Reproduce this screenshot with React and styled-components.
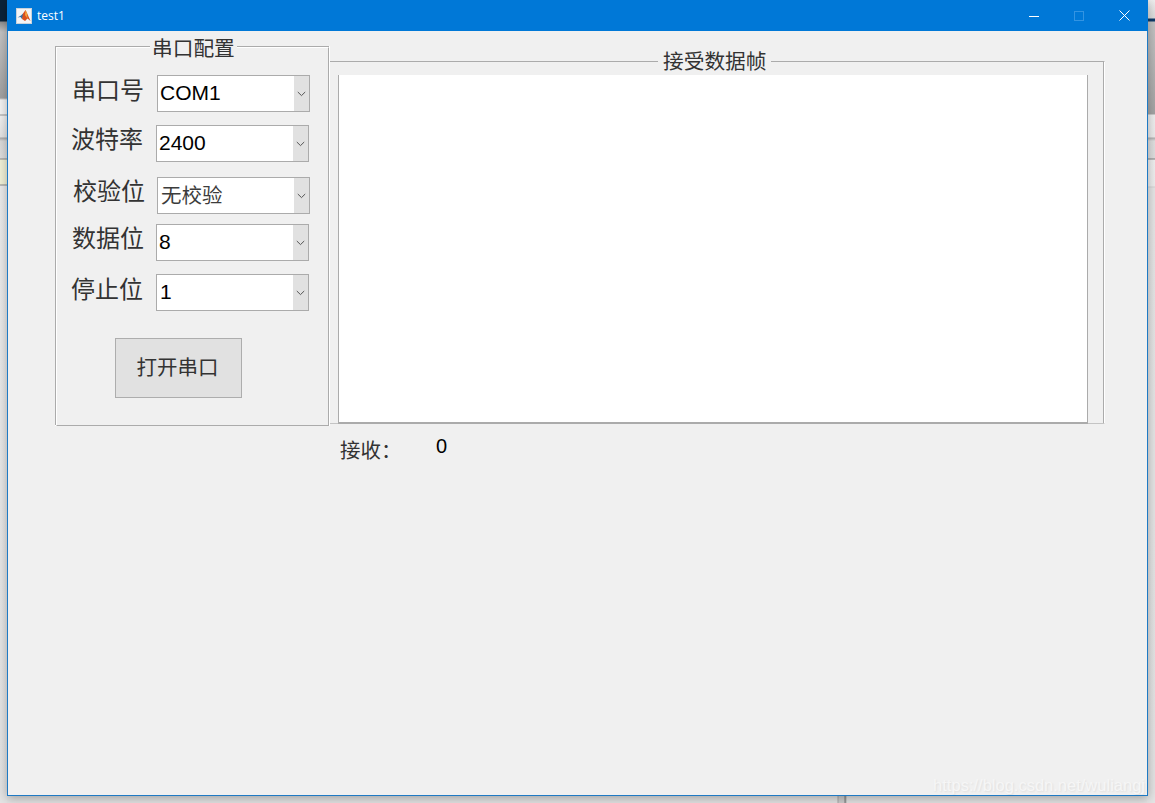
import React from 'react'
import styled, { createGlobalStyle } from 'styled-components'

const GlobalStyle = createGlobalStyle`
html, body {
  margin: 0;
  padding: 0;
  overflow: hidden;
}
`

const cjk = `"Noto Sans CJK SC", "Liberation Sans", sans-serif`
const latin = `"Liberation Sans", Arial, sans-serif`

const Desktop = styled.div`
  width: 1155px;
  height: 803px;
  overflow: hidden;
  background:
    linear-gradient(to bottom,
      #0b2338 0, #0b2338 21px, #8f8f8f 22px, #c4c4c4 32px, #a2a2a2 98px,
      #f4f4f4 100px, #f4f4f4 114px, #9a9a9a 115px, #f2f2f2 116px, #e4e4e4 137px,
      #a8a8a8 138px, #dadada 141px, #dedede 158px, #8a8a8a 159px, #f2f2d8 160px,
      #f2f2d8 184px, #8a8a8a 185px, #ececec 186px, #e4e4e4 100%) 0 0 / 7px 100% no-repeat,
    linear-gradient(to bottom,
      #eeeeee 0, #dcdcdc 18px, #0d3a6a 19px, #0d3a6a 21px, #c4c4c4 22px, #a4a4a4 114px,
      #f0f0f0 115px, #ececec 137px, #b0b0b0 138px, #e0e0e0 141px, #dedede 158px,
      #808080 159px, #f0f0f0 160px, #eeeeee 186px, #d4d4d4 187px, #e6e6e6 188px, #e4e4e4 100%) 100% 0 / 8px 100% no-repeat,
    linear-gradient(to right,
      #e2e2e2 0, #e2e2e2 837px, #a8a8a8 838px, #cccccc 839px, #cccccc 844px,
      #7d7d7d 845px, #e2e2e2 847px, #e2e2e2 100%);
`

const Window = styled.div`
  position: relative;
  box-sizing: border-box;
  width: 1141px;
  height: 796px;
  margin-left: 7px;
  border: 1px solid #1f7ac4;
  border-top: none;
  background: #f0f0f0;
  box-shadow: 0 2px 10px rgba(0, 0, 0, 0.3);
  display: flex;
  flex-direction: column;
`

const TitleBar = styled.div`
  height: 31px;
  margin: 0 -1px;
  background: #0078d7;
  display: flex;
  align-items: center;
  flex-shrink: 0;
`

const AppIcon = styled.svg`
  width: 16px;
  height: 16px;
  margin-left: 9px;
  margin-top: 1px;
`

const Title = styled.span`
  margin-left: 5px;
  font-family: "Open Sans", "Noto Sans", sans-serif;
  font-size: 12px;
  color: #ffffff;
`

const Controls = styled.div`
  margin-left: auto;
  display: flex;
  height: 100%;
`

const ControlButton = styled.div`
  width: ${(p) => (p.$close ? 47 : 45)}px;
  display: flex;
  align-items: center;
  justify-content: center;
`

const Content = styled.div`
  flex: 1;
  display: flex;
  align-items: flex-start;
  padding: 15px 0 0 47px;
`

const ConfigPanel = styled.div`
  position: relative;
  box-sizing: border-box;
  width: 275px;
  height: 380px;
  border: 1px solid #ffffff;
  border-top: none;
  border-left: none;
  box-shadow: inset 1px 1px 0 #ababab;
  flex-shrink: 0;
`

const PanelInner = styled.div`
  box-sizing: border-box;
  height: 100%;
  border: 1px solid #ffffff;
  border-right-color: #ababab;
  border-bottom-color: #ababab;
  margin: 1px 0 0 1px;
  padding-top: 27px;
`

const Legend = styled.span`
  position: absolute;
  top: ${(p) => p.$top}px;
  left: ${(p) => p.$left}px;
  padding: 0 ${(p) => p.$pad}px;
  background: #f0f0f0;
  font-family: ${cjk};
  font-size: 20.7px;
  line-height: 26px;
  color: #333333;
  white-space: nowrap;
`

const Row = styled.div`
  display: grid;
  grid-template-columns: 99px 154px;
  margin-top: ${(p) => p.$top}px;
`

const Label = styled.span`
  padding-left: ${(p) => p.$left}px;
  margin-top: ${(p) => p.$shift}px;
  font-family: ${cjk};
  font-size: 24px;
  line-height: 32px;
  color: #333333;
  white-space: nowrap;
`

const Dropdown = styled.div`
  box-sizing: border-box;
  width: 153px;
  height: 37px;
  margin-left: ${(p) => p.$left}px;
  border: 1px solid #ababab;
  background: #ffffff;
  display: flex;
  align-items: center;
`

const DropdownValue = styled.span`
  flex: 1;
  padding-left: ${(p) => p.$pad}px;
  padding-bottom: ${(p) => (p.$cjk ? 4 : 2)}px;
  font-family: ${(p) => (p.$cjk ? cjk : latin)};
  font-size: ${(p) => (p.$cjk ? 20.5 : 21)}px;
  color: ${(p) => (p.$cjk ? '#3c3c3c' : '#000000')};
`

const DropdownArrow = styled.div`
  width: 15px;
  height: 100%;
  background: #e1e1e1;
  display: flex;
  align-items: center;
  justify-content: center;
`

const OpenButton = styled.button`
  display: block;
  box-sizing: border-box;
  width: 127px;
  height: 60px;
  margin: 27px 0 0 58px;
  padding: 0 2px 4px 0;
  border: 1px solid #adadad;
  background: #e1e1e1;
  font-family: ${cjk};
  font-size: 20.5px;
  color: #333333;
`

const RightColumn = styled.div`
  margin-top: 15px;
  flex-shrink: 0;
`

const DataPanel = styled.div`
  position: relative;
  box-sizing: border-box;
  width: 775px;
  height: 363px;
  border-top: 1px solid #ababab;
  border-right: 1px solid #ffffff;
  border-bottom: 1px solid #c4c4c4;
  box-shadow: inset -1px 0 0 #ababab;
  padding: 13px 0 0 8px;
`

const DataBox = styled.div`
  box-sizing: border-box;
  width: 750px;
  height: 349px;
  background: #ffffff;
  border-left: 1px solid #ababab;
  border-right: 1px solid #ababab;
  border-bottom: 2px solid #ababab;
`

const CountRow = styled.div`
  display: flex;
  align-items: flex-start;
  padding-left: 10px;
  margin-top: 11px;
`

const CountLabel = styled.span`
  width: 96px;
  font-family: ${cjk};
  font-size: 20.5px;
  line-height: 28px;
  color: #333333;
`

const CountValue = styled.span`
  margin-top: -1px;
  font-family: ${latin};
  font-size: 20px;
  line-height: 24px;
  color: #000000;
`

const Watermark = styled.span`
  position: absolute;
  right: 2px;
  bottom: 0;
  font-family: ${latin};
  font-size: 16.5px;
  line-height: 20px;
  color: #f6f6f6;
  text-shadow: 1px 1px 2px rgba(0, 0, 0, 0.08);
  white-space: nowrap;
`

const Chevron = () => (
  <svg width="9" height="6" viewBox="0 0 9 6">
    <polyline points="0.8,1 4.5,4.6 8.2,1" fill="none" stroke="#555555" strokeWidth="1" />
  </svg>
)

const rows = [
  { label: '串口号', value: 'COM1', top: 0, labelLeft: 15, shift: -2, left: 1, pad: 2 },
  { label: '波特率', value: '2400', top: 13, labelLeft: 14, shift: -3, left: 0, pad: 2 },
  { label: '校验位', value: '无校验', top: 15, labelLeft: 16, shift: -3, left: 1, pad: 3, cjk: true },
  { label: '数据位', value: '8', top: 10, labelLeft: 15, shift: -3, left: 0, pad: 2 },
  { label: '停止位', value: '1', top: 13, labelLeft: 14, shift: -2, left: 0, pad: 3 },
]

function App() {
  return (
    <Desktop>
      <GlobalStyle />
      <Window>
        <TitleBar>
          <AppIcon viewBox="0 0 16 16">
            <rect x="0.5" y="0.5" width="15" height="15" fill="#f2f4f6" stroke="#c9d2da" />
            <path d="M1.5 9.5 L5 7.5 L7 5.5 L8.5 6.5 L6 11 L4.5 9 Z" fill="#2f6fa8" />
            <path d="M7 5.5 L9.5 2 L11 5 L14.5 13 L11.5 10.5 L9 13 L6 11 Z" fill="#d9501e" />
            <path d="M9.5 2 L11 5 L11.5 10.5 L9 7 Z" fill="#f2a03a" />
          </AppIcon>
          <Title>test1</Title>
          <Controls>
            <ControlButton>
              <svg width="10" height="10" viewBox="0 0 10 10">
                <line x1="0" y1="5.5" x2="10" y2="5.5" stroke="#ffffff" />
              </svg>
            </ControlButton>
            <ControlButton>
              <svg width="10" height="10" viewBox="0 0 10 10">
                <rect x="0.5" y="0.5" width="9" height="9" fill="none" stroke="#3394e2" />
              </svg>
            </ControlButton>
            <ControlButton $close>
              <svg width="11" height="11" viewBox="0 0 11 11">
                <path d="M0.5 0.5 L10.5 10.5 M10.5 0.5 L0.5 10.5" stroke="#ffffff" fill="none" />
              </svg>
            </ControlButton>
          </Controls>
        </TitleBar>
        <Content>
          <ConfigPanel>
            <Legend $top={-12} $left={95} $pad={2}>串口配置</Legend>
            <PanelInner>
              {rows.map((row) => (
                <Row key={row.label} $top={row.top}>
                  <Label $left={row.labelLeft} $shift={row.shift}>{row.label}</Label>
                  <Dropdown $left={row.left}>
                    <DropdownValue $pad={row.pad} $cjk={row.cjk}>{row.value}</DropdownValue>
                    <DropdownArrow><Chevron /></DropdownArrow>
                  </Dropdown>
                </Row>
              ))}
              <OpenButton>打开串口</OpenButton>
            </PanelInner>
          </ConfigPanel>
          <RightColumn>
            <DataPanel>
              <Legend $top={-15} $left={328} $pad={5}>接受数据帧</Legend>
              <DataBox />
            </DataPanel>
            <CountRow>
              <CountLabel>接收：</CountLabel>
              <CountValue>0</CountValue>
            </CountRow>
          </RightColumn>
        </Content>
        <Watermark>https://blog.csdn.net/wuliangj</Watermark>
      </Window>
    </Desktop>
  )
}

export default App
